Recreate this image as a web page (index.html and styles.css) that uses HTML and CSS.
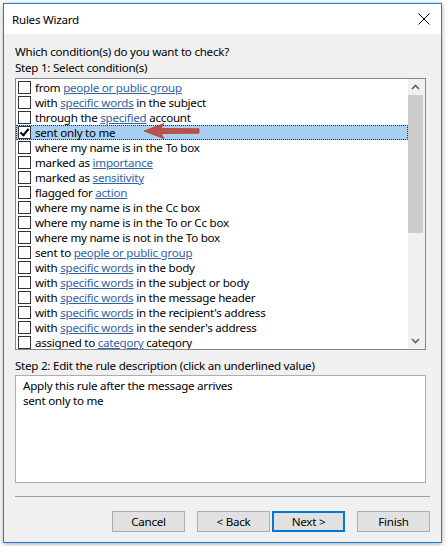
FILE: index.html
```html
<!DOCTYPE html>
<html>

<head>
    <meta name="viewport" content="width=device-width, initial-scale=1">
    <link rel="stylesheet" href="styles.css">
</head>

<body>
    <div class="window">
        <div class="titlebar">
            <span class="title">Rules Wizard</span>
            <svg class="close" width="12" height="12" viewBox="0 0 12 12">
                <path d="M0.5 0.5 L11.5 11.5 M11.5 0.5 L0.5 11.5" stroke="#000" stroke-width="1" fill="none" />
            </svg>
        </div>

        <div class="content">
            <div class="label">Which condition(s) do you want to check?</div>
            <div class="label">Step 1: Select condition(s)</div>

            <div class="listbox">
                <ul class="conditions">
                    <li><span class="check"></span>from <a>people or public group</a></li>
                    <li><span class="check"></span>with <a>specific words</a> in the subject</li>
                    <li><span class="check"></span>through the <a>specified</a> account</li>
                    <li class="selected"><span class="check checked"></span>sent only to me</li>
                    <li><span class="check"></span>where my name is in the To box</li>
                    <li><span class="check"></span>marked as <a>importance</a></li>
                    <li><span class="check"></span>marked as <a>sensitivity</a></li>
                    <li><span class="check"></span>flagged for <a>action</a></li>
                    <li><span class="check"></span>where my name is in the Cc box</li>
                    <li><span class="check"></span>where my name is in the To or Cc box</li>
                    <li><span class="check"></span>where my name is not in the To box</li>
                    <li><span class="check"></span>sent to <a>people or public group</a></li>
                    <li><span class="check"></span>with <a>specific words</a> in the body</li>
                    <li><span class="check"></span>with <a>specific words</a> in the subject or body</li>
                    <li><span class="check"></span>with <a>specific words</a> in the message header</li>
                    <li><span class="check"></span>with <a>specific words</a> in the recipient's address</li>
                    <li><span class="check"></span>with <a>specific words</a> in the sender's address</li>
                    <li><span class="check"></span>assigned to <a>category</a> category</li>
                </ul>

                <div class="scrollbar">
                    <div class="scroll-btn">
                        <svg width="9" height="6" viewBox="0 0 9 6">
                            <path d="M1 5 L4.5 1.5 L8 5" stroke="#606060" stroke-width="1.6" fill="none" />
                        </svg>
                    </div>
                    <div class="track">
                        <div class="thumb"></div>
                    </div>
                    <div class="scroll-btn">
                        <svg width="9" height="6" viewBox="0 0 9 6">
                            <path d="M1 1 L4.5 4.5 L8 1" stroke="#606060" stroke-width="1.6" fill="none" />
                        </svg>
                    </div>
                </div>

                <!-- callout arrow pointing at the picked condition -->
                <svg class="pointer" width="58" height="18" viewBox="0 0 58 18">
                    <path d="M1 9 L21 1.5 L18 6.5 L56 6.8 L56 11.2 L18 11.5 L21 16.5 Z" fill="#c0504d" stroke="#a8412f" stroke-width="0.8" />
                </svg>
            </div>

            <div class="label step2">Step 2: Edit the rule description (click an underlined value)</div>
            <div class="description">
                <div>Apply this rule after the message arrives</div>
                <div>sent only to me</div>
            </div>

            <hr class="separator">

            <div class="buttons">
                <button>Cancel</button>
                <button class="back">&lt; Back</button>
                <button class="default">Next &gt;</button>
                <button>Finish</button>
            </div>
        </div>
    </div>
</body>

</html>
```

FILE: styles.css
```css
body {
    margin: 0;
    background: #fff;
    font-family: "Noto Sans", "Open Sans", sans-serif;
    font-size: 11.6px;
    letter-spacing: -0.25px;
    color: #000;
}

.window {
    margin: 3px;
    width: 437px;
    border: 1px solid #1c7fd6;
    box-shadow: 0 1px 5px rgba(0, 0, 0, 0.35);
    background: #f0f0f0;
}

.titlebar {
    height: 30px;
    background: #fff;
    display: flex;
    align-items: center;
    justify-content: space-between;
    padding: 0 10px 0 8px;
}

.title {
    margin-top: 1px;
}

.close {
    margin-right: 1px;
}

.content {
    padding: 10px 15px 10px 11px;
}

.label {
    height: 16px;
    line-height: 16px;
}

.listbox {
    position: relative;
    margin-top: 2px;
    height: 270px;
    border: 1px solid #828790;
    background: #fff;
    display: flex;
    overflow: hidden;
}

.conditions {
    list-style: none;
    margin: 1px 0 0 0;
    padding: 0;
    flex: 1;
}

.conditions li {
    height: 15px;
    line-height: 15px;
    padding-left: 2px;
    white-space: nowrap;
    box-sizing: border-box;
}

.conditions li.selected {
    background: #a9cff1;
    outline: 1px dotted #333;
    outline-offset: -1px;
}

.conditions a {
    color: #2f63a6;
    text-decoration: underline;
}

.check {
    display: inline-block;
    vertical-align: top;
    width: 11px;
    height: 11px;
    margin: 1px 4px 0 0;
    border: 1px solid #333;
    background: #fff;
    position: relative;
}

.check.checked::after {
    content: "";
    position: absolute;
    left: 3px;
    top: 0px;
    width: 3px;
    height: 7px;
    border: solid #000;
    border-width: 0 2px 2px 0;
    transform: rotate(40deg);
}

.scrollbar {
    width: 17px;
    flex: none;
    background: #f0f0f0;
    display: flex;
    flex-direction: column;
}

.scroll-btn {
    height: 16px;
    display: flex;
    align-items: center;
    justify-content: center;
    padding-right: 2px;
}

.track {
    flex: 1;
}

.thumb {
    height: 138px;
    margin-right: 2px;
    background: #cdcdcd;
}

.pointer {
    position: absolute;
    left: 127px;
    top: 43px;
}

.step2 {
    margin-top: 8px;
}

.description {
    margin-top: 1px;
    height: 100px;
    border: 1px solid #adadad;
    background: #fff;
    padding: 2px 7px 4px 7px;
    line-height: 15px;
}

.separator {
    margin: 13px -4px 0 0;
    border: none;
    border-top: 1px solid #a0a0a0;
    height: 0;
}

.buttons {
    margin-top: 14px;
    display: flex;
    justify-content: flex-end;
    margin-right: -4px;
}

button {
    width: 73px;
    height: 21px;
    margin-left: 12px;
    background: #e1e1e1;
    border: 1px solid #adadad;
    font-family: inherit;
    font-size: inherit;
    letter-spacing: inherit;
    color: #000;
    padding: 0;
}

button.default {
    margin-left: 2px;
    border: 2px solid #0078d7;
}
```
